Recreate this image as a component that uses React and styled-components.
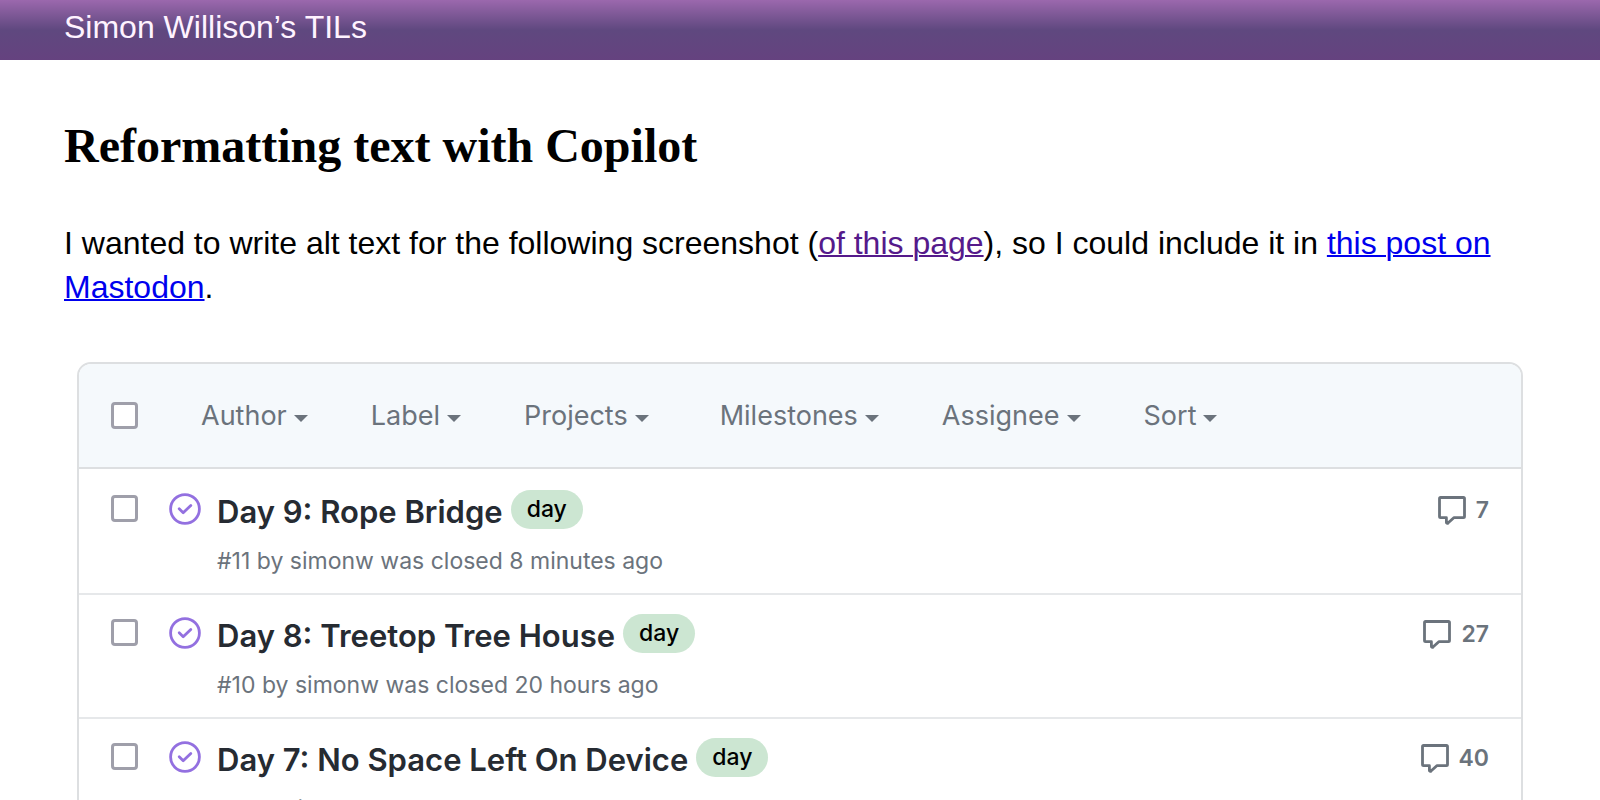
import React from 'react'
import styled, { createGlobalStyle } from 'styled-components'

const filters = ['Author', 'Label', 'Projects', 'Milestones', 'Assignee', 'Sort']

const issues = [
  { number: 11, title: 'Day 9: Rope Bridge', closed: '8 minutes ago', comments: 7 },
  { number: 10, title: 'Day 8: Treetop Tree House', closed: '20 hours ago', comments: 27 },
  { number: 9, title: 'Day 7: No Space Left On Device', closed: 'yesterday', comments: 40 },
]

const ClosedIcon = () => (
  <StateSvg viewBox="0 0 16 16" aria-hidden="true">
    <circle cx="8" cy="8" r="7.2" />
    <path d="M5.1 7.9l2 2 3.8-3.7" />
  </StateSvg>
)

const CommentIcon = () => (
  <CommentSvg viewBox="0 0 16 16" aria-hidden="true">
    <path d="M2.3 1.75h11.4a.55.55 0 0 1 .55.55v9a.55.55 0 0 1-.55.55H8.9L6 14.5a.45.45 0 0 1-.8-.3v-2.35H2.3a.55.55 0 0 1-.55-.55v-9a.55.55 0 0 1 .55-.55z" />
  </CommentSvg>
)

const IssueRow = ({ issue }) => (
  <Row>
    <Checkbox aria-label={`Select ${issue.title}`} />
    <ClosedIcon />
    <Details>
      <TitleLine>
        <Title>{issue.title}</Title>
        <Label>day</Label>
      </TitleLine>
      <Meta>#{issue.number} by simonw was closed {issue.closed}</Meta>
    </Details>
    <Comments>
      <CommentIcon />
      {issue.comments}
    </Comments>
  </Row>
)

const App = () => (
  <>
    <GlobalStyle />
    <Header>Simon Willison’s TILs</Header>
    <Content>
      <Heading>Reformatting text with Copilot</Heading>
      <Paragraph>
        I wanted to write alt text for the following screenshot (
        <Link href="#page" $visited>of this page</Link>
        ), so I could include it in <Link href="#mastodon">this post on Mastodon</Link>.
      </Paragraph>
      <IssueList>
        <Toolbar>
          <Checkbox aria-label="Select all issues" />
          <Filters>
            {filters.map(name => (
              <FilterButton key={name} $spaced={name === 'Milestones'}>
                {name}
                <Caret />
              </FilterButton>
            ))}
          </Filters>
        </Toolbar>
        {issues.map(issue => <IssueRow key={issue.number} issue={issue} />)}
      </IssueList>
    </Content>
  </>
)

const GlobalStyle = createGlobalStyle`
  * {
    box-sizing: border-box;
  }
  body {
    margin: 0;
    background: #fff;
    color: #000;
    font-family: "Liberation Sans", Arial, sans-serif;
    font-size: 32px;
    line-height: 44px;
  }
`
const Header = styled.header`
  height: 60px;
  padding: 5px 4%;
  color: #fff3ff;
  background: linear-gradient(to bottom, #9b68ad 0%, #5f487f 50%, #65427f 100%);
`
const Content = styled.main`
  padding: 0 4%;
`
const Heading = styled.h1`
  margin: 58px 0 47px;
  font-family: "Liberation Serif", "Times New Roman", serif;
  font-size: 48px;
  line-height: 56px;
`
const Paragraph = styled.p`
  margin: 0;
`
const Link = styled.a`
  color: ${props => (props.$visited ? '#551a8b' : '#0000ee')};
  text-decoration-thickness: 2px;
`
const IssueList = styled.section`
  margin: 53px 13px 0;
  border: 2px solid #dddfe1;
  border-radius: 14px;
  overflow: hidden;
  font-family: Inter, sans-serif;
  color: #6b737c;
`
const Toolbar = styled.div`
  display: flex;
  align-items: center;
  height: 103px;
  padding: 0 32px;
  background: #f5f9fc;
`
const Checkbox = styled.input.attrs({ type: 'checkbox' })`
  appearance: none;
  flex: none;
  width: 27px;
  height: 27px;
  margin: 0;
  border: 3px solid #9f9faa;
  border-radius: 4px;
  background: #fff;
`
const Filters = styled.div`
  display: flex;
  gap: 63px;
  margin-left: 63px;
`
const FilterButton = styled.button`
  display: flex;
  align-items: center;
  gap: 7px;
  margin: 0 0 0 ${props => (props.$spaced ? '8px' : '0')};
  padding: 0;
  border: 0;
  background: none;
  color: inherit;
  font: 27px/36px Inter, sans-serif;
`
const Caret = styled.span`
  margin-top: 5px;
  border: 7px solid transparent;
  border-top-color: currentColor;
  border-bottom: 0;
`
const Row = styled.article`
  display: flex;
  align-items: flex-start;
  height: 124px;
  padding: 24px 32px 0;
  border-top: 2px solid #e6e8ea;

  &:first-of-type {
    height: 126px;
    padding-top: 26px;
    border-top-color: #dddfe1;
  }
`
const StateSvg = styled.svg`
  flex: none;
  width: 32px;
  height: 32px;
  margin: -2px 16px 0 31px;
  fill: none;
  stroke: #9370e0;
  stroke-width: 1.4;
  stroke-linecap: round;
  stroke-linejoin: round;
`
const Details = styled.div`
  flex: 1;
`
const TitleLine = styled.div`
  display: flex;
  align-items: flex-start;
  gap: 8px;
  margin-top: -5px;
`
const Title = styled.h2`
  margin: 2px 0 0;
  color: #262b32;
  font-size: 31px;
  font-weight: 600;
  line-height: 40px;
`
const Label = styled.span`
  padding: 0 16px;
  border-radius: 20px;
  background: #cce6d2;
  color: #000;
  font-size: 23px;
  font-weight: 500;
  line-height: 39px;
`
const Meta = styled.div`
  margin-top: 13px;
  font-size: 23px;
  line-height: 32px;
`
const Comments = styled.a.attrs({ href: '#comments' })`
  display: flex;
  align-items: center;
  gap: 8px;
  margin-top: -1px;
  color: inherit;
  font-size: 23px;
  font-weight: 600;
  line-height: 32px;
  text-decoration: none;
`
const CommentSvg = styled.svg`
  width: 32px;
  height: 32px;
  fill: none;
  stroke: currentColor;
  stroke-width: 1.4;
  stroke-linejoin: round;
`

export default App
